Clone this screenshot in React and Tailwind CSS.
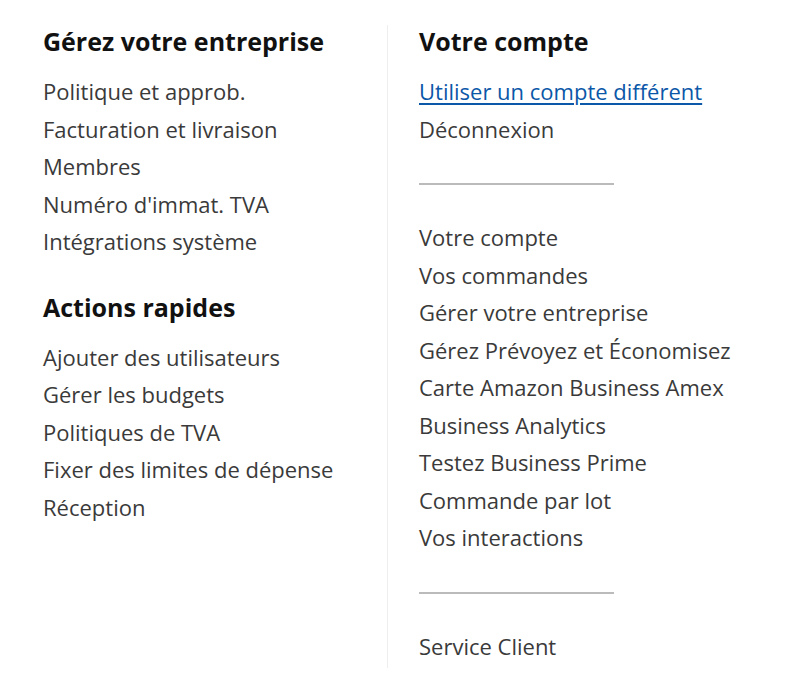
import React from "react";

const Item = ({ children }) => (
  <div className="h-[37.5px] leading-[37.5px] text-[22px] text-[#3a3a3a] whitespace-nowrap">{children}</div>
);

const Heading = ({ children, className = "" }) => (
  <div className={"h-[30px] leading-[30px] text-[25px] font-bold text-[#111] whitespace-nowrap " + className}>{children}</div>
);

export default function App() {
  return (
    <div className="bg-white w-[791px] h-[694px] flex pt-[25px] pl-[43px]" style={{ fontFamily: '"Open Sans", "Noto Sans", sans-serif' }}>
      <div className="w-[345px] h-[643px] border-r border-[#eeeeee] pt-[1px] shrink-0">
        <Heading>Gérez votre entreprise</Heading>
        <div className="mt-[17px]">
          <Item>Politique et approb.</Item>
          <Item>Facturation et livraison</Item>
          <Item>Membres</Item>
          <Item>Numéro d'immat. TVA</Item>
          <Item>Intégrations système</Item>
        </div>
        <Heading className="mt-[31px]">Actions rapides</Heading>
        <div className="mt-[17px]">
          <Item>Ajouter des utilisateurs</Item>
          <Item>Gérer les budgets</Item>
          <Item>Politiques de TVA</Item>
          <Item>Fixer des limites de dépense</Item>
          <Item>Réception</Item>
        </div>
      </div>
      <div className="pl-[31px] pt-[1px]">
        <Heading>Votre compte</Heading>
        <div className="mt-[17px]">
          <div className="h-[37.5px] leading-[37.5px] text-[22px] text-[#0b57a8] underline underline-offset-[3px] whitespace-nowrap">Utiliser un compte différent</div>
          <Item>Déconnexion</Item>
        </div>
        <div className="mt-[35px] mb-[34px] w-[195px] h-[2px] bg-[#bbbbbb]" />
        <Item>Votre compte</Item>
        <Item>Vos commandes</Item>
        <Item>Gérer votre entreprise</Item>
        <Item>Gérez Prévoyez et Économisez</Item>
        <Item>Carte Amazon Business Amex</Item>
        <Item>Business Analytics</Item>
        <Item>Testez Business Prime</Item>
        <Item>Commande par lot</Item>
        <Item>Vos interactions</Item>
        <div className="mt-[35px] mb-[34px] w-[195px] h-[2px] bg-[#bbbbbb]" />
        <Item>Service Client</Item>
      </div>
    </div>
  );
}
